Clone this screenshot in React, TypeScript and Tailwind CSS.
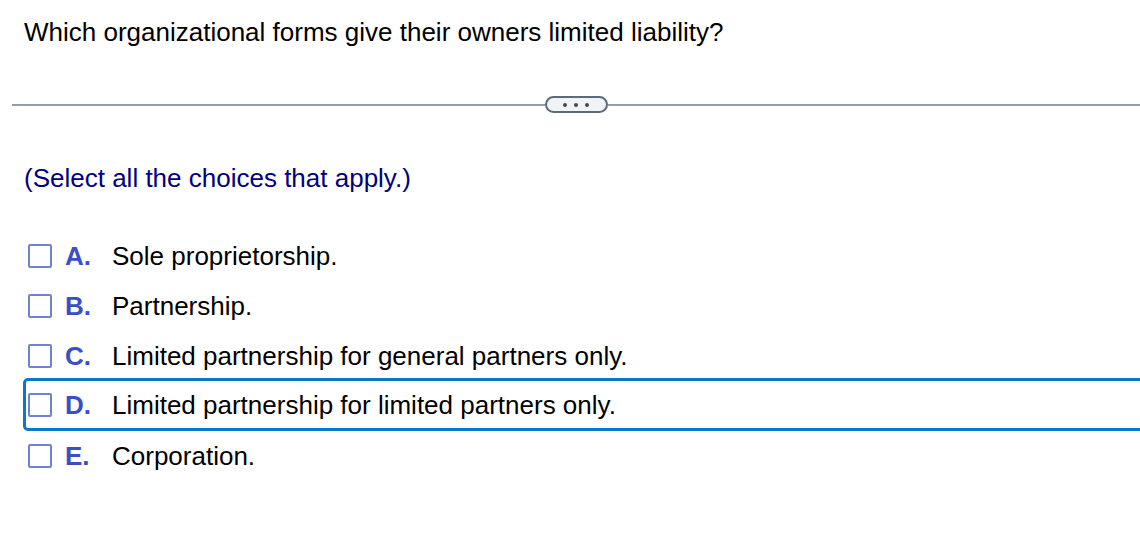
import React from "react";

const options = [
  { letter: "A.", text: "Sole proprietorship." },
  { letter: "B.", text: "Partnership." },
  { letter: "C.", text: "Limited partnership for general partners only." },
  { letter: "D.", text: "Limited partnership for limited partners only.", focused: true },
  { letter: "E.", text: "Corporation." },
];

export default function App() {
  return (
    <div
      className="w-[1140px] h-[542px] overflow-hidden bg-white text-black"
      style={{ fontFamily: '"Liberation Sans", Arial, Helvetica, sans-serif' }}
    >
      <div className="pt-[17px] pl-[24px] text-[26px] leading-[30px]">
        Which organizational forms give their owners limited liability?
      </div>

      <div className="mt-[49px] ml-[12px] flex items-center h-[17px]">
        <div className="flex-1 h-[2px] bg-[#949eab]" />
        <button className="w-[63px] h-[17px] rounded-[9px] border-2 border-[#5d6a79] bg-[#f1f4f6] flex items-center justify-center gap-[7px]">
          <span className="w-[4px] h-[4px] rounded-full bg-[#3f4a57]" />
          <span className="w-[4px] h-[4px] rounded-full bg-[#3f4a57]" />
          <span className="w-[4px] h-[4px] rounded-full bg-[#3f4a57]" />
        </button>
        <div className="flex-1 h-[2px] bg-[#949eab]" />
      </div>

      <div className="mt-[50px] pl-[24px] text-[26px] leading-[30px] text-[#000080]">
        (Select all the choices that apply.)
      </div>

      <div className="mt-[38px] flex flex-col">
        {options.map((o) =>
          o.focused ? (
            <div
              key={o.letter}
              className="ml-[23px] -mt-[3px] w-[1130px] h-[53px] flex items-center pl-[2px] text-[26px] leading-[30px] border-[3px] border-[#0a78c8] rounded-[5px]"
            >
              <span className="w-[24px] h-[24px] border-2 border-[#6f82d8] rounded-[2px] bg-white shrink-0" />
              <span className="ml-[13px] w-[47px] font-bold text-[#3a4fc6] shrink-0">{o.letter}</span>
              <span>{o.text}</span>
            </div>
          ) : (
            <div
              key={o.letter}
              className="ml-[24px] w-[1130px] h-[50px] flex items-center pl-[4px] text-[26px] leading-[30px]"
            >
              <span className="w-[24px] h-[24px] border-2 border-[#6f82d8] rounded-[2px] bg-white shrink-0" />
              <span className="ml-[13px] w-[47px] font-bold text-[#3a4fc6] shrink-0">{o.letter}</span>
              <span>{o.text}</span>
            </div>
          )
        )}
      </div>
    </div>
  );
}
